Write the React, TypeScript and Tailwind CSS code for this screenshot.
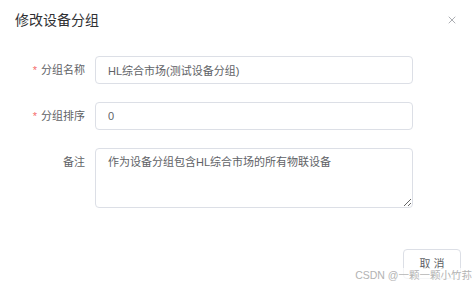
import { X } from "lucide-react";

const fields = [
  { label: "分组名称", required: true, value: "HL综合市场(测试设备分组)" },
  { label: "分组排序", required: true, value: "0" },
];

export default function App() {
  return (
    <div
      className="relative w-[476px] h-[288px] overflow-hidden bg-white"
      style={{ fontFamily: '"Liberation Sans", "Noto Sans CJK SC", sans-serif' }}
    >
      {/* Header */}
      <div className="flex items-start justify-between pl-[15px] pr-[18px] pt-[12px]">
        <span className="text-[14px] leading-[16px] text-[#303133]">修改设备分组</span>
        <X className="mt-[2px] w-[12px] h-[12px] text-[#909399]" strokeWidth={1.5} />
      </div>

      {/* Form */}
      <div className="mt-[28px] flex flex-col gap-[18px]">
        {fields.map((f) => (
          <div key={f.label} className="flex items-start">
            <label className="w-[95px] pr-[10px] text-right text-[11px] leading-[28px] text-[#606266]">
              {f.required && <span className="mr-[4px] text-[#f56c6c]">*</span>}
              {f.label}
            </label>
            <input
              readOnly
              value={f.value}
              className="w-[318px] h-[28px] rounded-[4px] border border-[#dcdfe6] px-[12px] text-[11px] text-[#606266] outline-none"
            />
          </div>
        ))}
        <div className="flex items-start">
          <label className="w-[95px] pr-[10px] text-right text-[11px] leading-[28px] text-[#606266]">备注</label>
          <textarea
            readOnly
            defaultValue="作为设备分组包含HL综合市场的所有物联设备"
            className="block w-[318px] h-[60px] rounded-[4px] border border-[#dcdfe6] px-[12px] py-[5px] text-[11px] leading-[16px] text-[#606266] outline-none"
          />
        </div>
      </div>

      {/* Footer */}
      <div className="mt-[41px] flex justify-end pr-[15px]">
        <button className="h-[30px] w-[58px] rounded-[4px] border border-[#dcdfe6] bg-white text-[11px] leading-[14px] text-[#606266]">
          取 消
        </button>
      </div>

      {/* Watermark */}
      <span className="absolute right-[4px] top-[268px] bg-white/70 text-[10.5px] leading-[14px] text-[#b3b3b3] whitespace-nowrap">
        CSDN @一颗一颗小竹荪
      </span>
    </div>
  );
}
